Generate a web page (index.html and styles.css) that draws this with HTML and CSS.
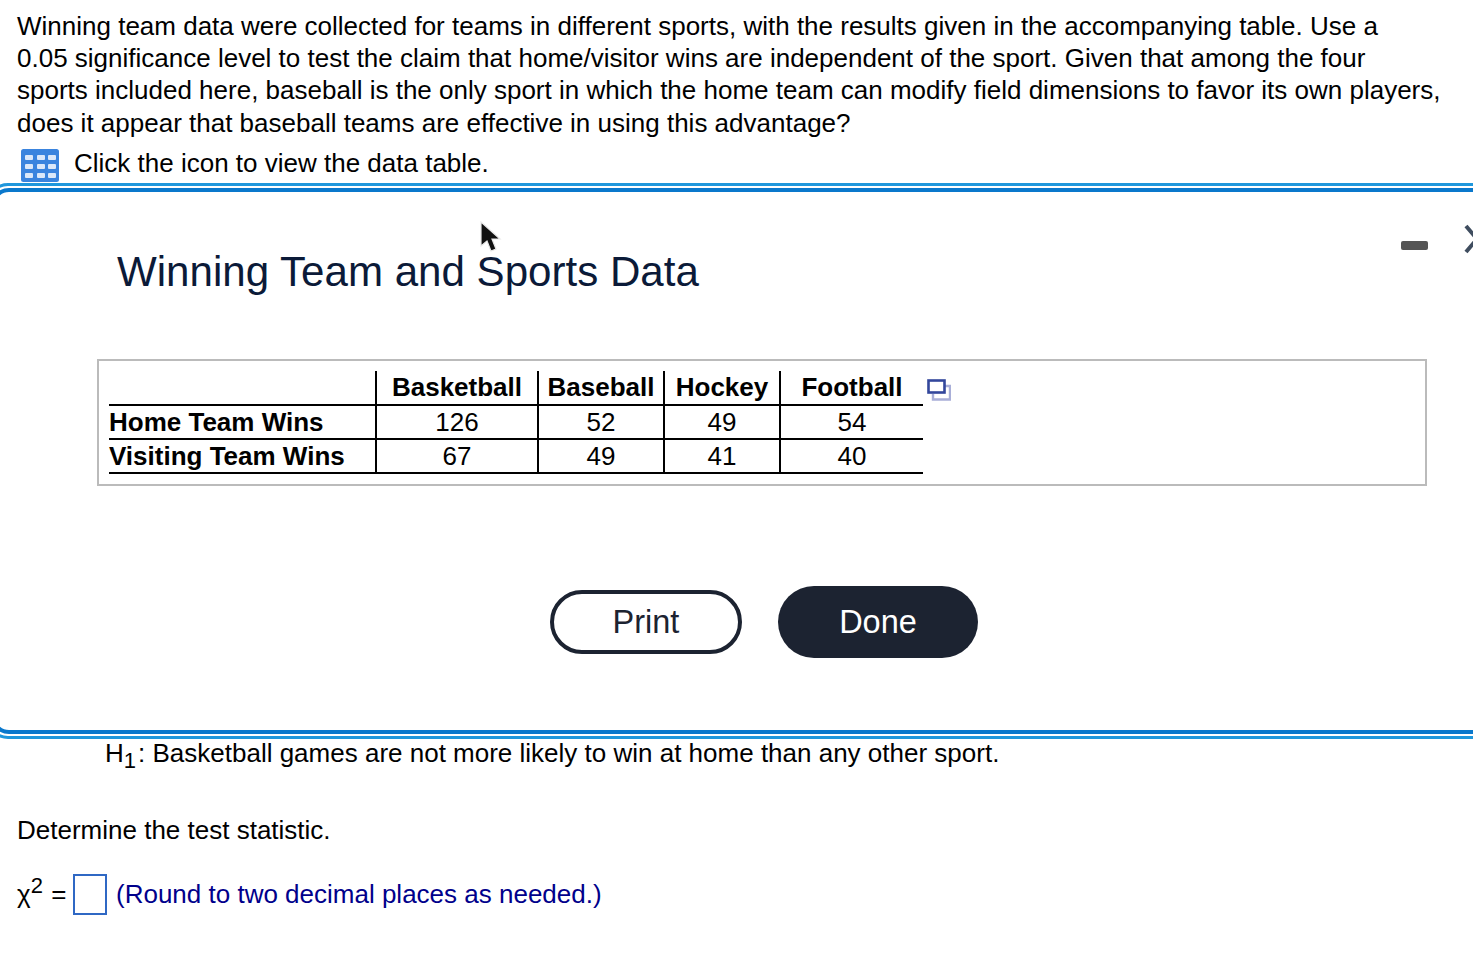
FILE: index.html
```html
<!DOCTYPE html>
<html lang="en">
<head>
  <meta charset="UTF-8" />
  <title>Winning Team and Sports Data</title>
  <link rel="stylesheet" href="styles.css">
</head>
<body>
  <div class="question">
    <p class="intro">Winning team data were collected for teams in different sports, with the results given in the accompanying table. Use a<br>0.05 significance level to test the claim that home/visitor wins are independent of the sport. Given that among the four<br>sports included here, baseball is the only sport in which the home team can modify field dimensions to favor its own players,<br>does it appear that baseball teams are effective in using this advantage?</p>
    <div class="data-link">
      <svg class="grid-icon" width="38" height="33" viewBox="0 0 38 33">
        <rect width="38" height="33" rx="2.5" fill="#3a84de"/>
        <g fill="#dbe8f9">
          <rect x="4" y="6" width="8" height="5" rx="1"/><rect x="16" y="6" width="8" height="5" rx="1"/><rect x="27" y="6" width="8" height="5" rx="1"/>
          <rect x="4" y="15" width="8" height="5" rx="1"/><rect x="16" y="15" width="8" height="5" rx="1"/><rect x="27" y="15" width="8" height="5" rx="1"/>
          <rect x="4" y="24" width="8" height="5" rx="1"/><rect x="16" y="24" width="8" height="5" rx="1"/><rect x="27" y="24" width="8" height="5" rx="1"/>
        </g>
      </svg>
      <span>Click the icon to view the data table.</span>
    </div>
  </div>

  <div class="modal">
    <div class="modal-inner">
      <h2>Winning Team and Sports Data</h2>
      <div class="table-box">
        <table>
          <tr class="head-row">
            <th class="row-head"></th>
            <th class="col-a">Basketball</th>
            <th class="col-b">Baseball</th>
            <th class="col-c">Hockey</th>
            <th class="col-d">Football</th>
          </tr>
          <tr>
            <th class="row-head">Home Team Wins</th>
            <td>126</td><td>52</td><td>49</td><td>54</td>
          </tr>
          <tr>
            <th class="row-head">Visiting Team Wins</th>
            <td>67</td><td>49</td><td>41</td><td>40</td>
          </tr>
        </table>
        <svg class="copy-icon" width="24" height="22" viewBox="0 0 24 22">
          <path d="M6 15v5.500h17V7h-6" fill="none" stroke="#a9afd8" stroke-width="2.4"/>
          <rect x="1.500" y="1.500" width="16" height="12" fill="#fff" stroke="#33479c" stroke-width="2.600"/>
        </svg>
      </div>
      <div class="actions">
        <button class="btn-print">Print</button>
        <button class="btn-done">Done</button>
      </div>
    </div>
    <div class="minimize"></div>
    <svg class="close" width="12" height="30" viewBox="0 0 12 30">
      <path d="M2 2l11 13L2 28" fill="none" stroke="#3f4d5f" stroke-width="4"/>
    </svg>
  </div>

  <svg class="cursor" width="24" height="34" viewBox="0 0 24 34">
    <path d="M2 1v24l6-5 4 10 5-2-4-10h8z" fill="#111" stroke="#e8e8e8" stroke-width="1.200"/>
  </svg>

  <div class="answer">
    <p class="hypothesis">H<sub>1</sub>: Basketball games are not more likely to win at home than any other sport.</p>
    <p class="prompt">Determine the test statistic.</p>
    <div class="stat-row">
      <span class="chi">χ<sup>2</sup> <span class="equals">=</span></span>
      <span class="answer-box"></span>
      <span class="hint">(Round to two decimal places as needed.)</span>
    </div>
  </div>
</body>
</html>
```

FILE: styles.css
```css
:root {
  --light-blue: #1f97dc;
  --dark-blue: #0a78cc;
  --navy: #0b1a38;
  --button-dark: #1c2331;
}

html, body {
  overflow: hidden;
}

body {
  margin: 0;
  height: 966px;
  position: relative;
  background: #fff;
  color: #000;
  font-family: "Liberation Sans", Arial, sans-serif;
  font-size: 26px;
}

p {
  margin: 0;
}

.question {
  height: 183px;
  padding: 10px 0 0 17px;
  box-sizing: border-box;
}

.intro {
  line-height: 32.2px;
  white-space: nowrap;
}

.data-link {
  display: flex;
  align-items: flex-start;
  gap: 15px;
  margin: 8px 0 0 4px;
  line-height: 33px;
}

.grid-icon {
  margin-top: 2px;
}

.modal {
  position: relative;
  width: 1600px;
  height: 556px;
  margin-left: -14px;
  box-sizing: border-box;
  border: 3px solid var(--light-blue);
  border-radius: 22px;
  padding: 2px;
}

.modal-inner {
  height: 100%;
  box-sizing: border-box;
  border: 4px solid var(--dark-blue);
  border-radius: 18px;
  padding: 50px 0 0 102px;
}

h2 {
  margin: 0 0 57px 20px;
  color: var(--navy);
  font-size: 42.1px;
  font-weight: 400;
  line-height: 60px;
}

.table-box {
  display: flex;
  align-items: flex-start;
  gap: 4px;
  width: 1330px;
  height: 127px;
  box-sizing: border-box;
  border: 2px solid #bbb;
  padding: 10px 0 0 10px;
}

table {
  border-collapse: collapse;
  table-layout: fixed;
  width: 814px;
  font-size: 26px;
  line-height: 32px;
}

th, td {
  height: 34px;
  padding: 0;
  text-align: center;
  border-bottom: 2px solid #000;
  border-left: 2px solid #000;
  box-sizing: border-box;
}

.head-row th {
  vertical-align: top;
}

th.row-head {
  width: 267px;
  text-align: left;
  border-left: 0;
}

.col-a { width: 162px; }
.col-b { width: 126px; }
.col-c { width: 116px; }
.col-d { width: 143px; }

.copy-icon {
  margin-top: 8px;
}

.actions {
  display: flex;
  justify-content: center;
  align-items: center;
  gap: 36px;
  width: 1334px;
  margin-top: 100px;
}

button {
  font-family: "Liberation Sans", Arial, sans-serif;
  font-size: 32.5px;
  border-radius: 36px;
  box-sizing: border-box;
}

.btn-print {
  width: 192px;
  height: 64px;
  background: #fff;
  color: var(--button-dark);
  border: 4px solid var(--button-dark);
}

.btn-done {
  width: 200px;
  height: 72px;
  background: var(--button-dark);
  color: #fff;
  border: 0;
}

.minimize {
  position: absolute;
  top: 55px;
  left: 1412px;
  width: 27px;
  height: 9px;
  border-radius: 2px;
  background: #555;
}

.close {
  position: absolute;
  top: 38px;
  left: 1475px;
}

.cursor {
  position: absolute;
  top: 221px;
  left: 479px;
}

.answer {
  padding-left: 17px;
}

.hypothesis {
  margin-left: 88px;
  line-height: 28px;
}

sub {
  font-size: 22px;
  line-height: 0;
  margin-right: 2px;
}

.prompt {
  margin-top: 47px;
  line-height: 32px;
}

.stat-row {
  display: flex;
  align-items: center;
  margin-top: 28px;
}

.chi {
  width: 56px;
  white-space: nowrap;
}

.chi sup {
  font-size: 22px;
  line-height: 0;
}

.equals {
  margin-left: 1px;
}

.answer-box {
  width: 34px;
  height: 41px;
  box-sizing: border-box;
  border: 2px solid #2f68c4;
}

.hint {
  margin-left: 9px;
  color: #00008b;
}
```
